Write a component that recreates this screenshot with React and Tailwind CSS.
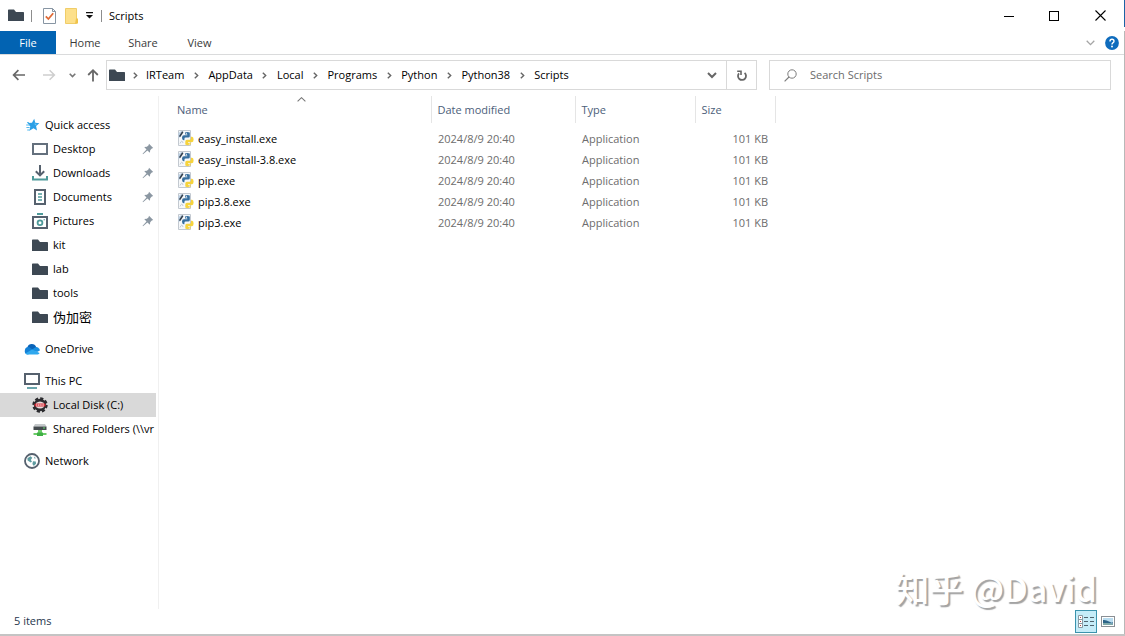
import React from "react";

const Folder = ({ className = "" }) => (
  <svg width="16" height="13" viewBox="0 0 16 13" className={"shrink-0 " + className} aria-hidden="true">
    <path d="M0 1.2Q0 .5.7.5H6L8 3H15.3Q16 3 16 3.7V12H0Z" fill="#3d4853" />
  </svg>
);

const Star = () => (
  <svg width="14" height="14" viewBox="0 0 14 14" className="ml-[2px] shrink-0" aria-hidden="true">
    <path d="M8.2.8 9.3 4.8 13.4 5.2 10.1 7.9 11 12.6 7.5 10.2 3.4 12.8 4.3 8.4 1.6 5 6 4.8Z" fill="#2b9fe6" />
    <path d="M.2 7H4M.4 9.5H3.6M1.2 12H3.8M1 4.6H3" stroke="#55b9ee" strokeWidth="1" />
    <path d="M8 3 8.8 5.6 11 6 9 7.6Z" fill="#6cc6f5" />
  </svg>
);

const Desktop = () => (
  <svg width="16" height="16" viewBox="0 0 16 16" aria-hidden="true">
    <rect x="1" y="3" width="14" height="10" fill="none" stroke="#64707d" strokeWidth="2" />
  </svg>
);

const Downloads = () => (
  <svg width="16" height="16" viewBox="0 0 16 16" fill="none" aria-hidden="true">
    <path d="M8 0V10M3.8 6.2 8 10.4 12.2 6.2" stroke="#56616e" strokeWidth="2" />
    <path d="M1 11V14.5H15V11" stroke="#4d9a9a" strokeWidth="2" />
  </svg>
);

const Documents = () => (
  <svg width="16" height="16" viewBox="0 0 16 16" fill="none" aria-hidden="true">
    <rect x="3" y="1" width="10" height="14" stroke="#56616e" strokeWidth="2" />
    <path d="M6 5H10M6 8H10M6 11H10" stroke="#4d9a9a" strokeWidth="1.4" />
  </svg>
);

const Pictures = () => (
  <svg width="16" height="16" viewBox="0 0 16 16" fill="none" aria-hidden="true">
    <path d="M5 1H11" stroke="#4d9a9a" strokeWidth="2" />
    <rect x="1" y="4" width="14" height="11" stroke="#56616e" strokeWidth="2" />
    <circle cx="8" cy="9.8" r="2.4" stroke="#4d9a9a" strokeWidth="1.8" />
    <path d="M11.5 6.8H13" stroke="#4d9a9a" />
  </svg>
);

const OneDrive = () => (
  <svg width="16" height="16" viewBox="0 0 16 16" aria-hidden="true">
    <path d="M3.4 6.3A4.7 4.7 0 0 1 12.2 6L13 9 6 10Z" fill="#0a63b8" />
    <path d="M3.6 13.4A3.6 3.6 0 1 1 5.4 6.2L12 11Z" fill="#1480d6" />
    <path d="M7.5 9 11 6.5A3.4 3.4 0 0 1 15.9 9.5L13 11Z" fill="#1a8fe0" />
    <path d="M1.3 12.4 8 8.5 15.6 12A2 2 0 0 1 13.5 13.4H3.6Q2 13.4 1.3 12.4Z" fill="#2fa8ee" />
  </svg>
);

const ThisPC = () => (
  <svg width="16" height="16" viewBox="0 0 16 16" fill="none" aria-hidden="true">
    <rect x="1" y="1" width="14" height="10" stroke="#56616e" strokeWidth="2" />
    <path d="M3 15H13" stroke="#6aa5ac" strokeWidth="2" />
  </svg>
);

const Disk = () => (
  <svg width="16" height="16" viewBox="0 0 16 16" aria-hidden="true">
    <circle cx="8" cy="8" r="6.6" fill="none" stroke="#2b2b2e" strokeWidth="2.2" strokeDasharray="3.2 1.98" />
    <circle cx="8" cy="8" r="6.2" fill="#2b2b2e" />
    <path d="M4 6Q8 3 12 6V10Q8 13 4 10Z" fill="#eadfdf" />
    <rect x="2.5" y="6.4" width="11" height="3.2" rx="1" fill="#d5303a" />
    <path d="M4 8H5.2M6.3 7.3V8.8M7.4 8H9M10 7.3V8.8M11 8H12" stroke="#fff" strokeWidth=".9" />
  </svg>
);

const Shared = () => (
  <svg width="16" height="16" viewBox="0 0 16 16" aria-hidden="true">
    <path d="M3 3H13L14.5 5.5H1.5Z" fill="#c4c8ca" />
    <rect x="1.5" y="5.5" width="13" height="3.5" fill="#454b4f" />
    <rect x="11" y="6.5" width="2" height="1" fill="#64df6c" />
    <path d="M6 9H10V12H14.5V14H1.5V12H6Z" fill="#6ccb68" />
    <path d="M5 11.5H11V15H5Z" fill="#3fb044" />
  </svg>
);

const Network = () => (
  <svg width="16" height="16" viewBox="0 0 16 16" aria-hidden="true">
    <circle cx="8" cy="8" r="7" fill="#fff" stroke="#56616e" strokeWidth="1.8" />
    <path d="M3.4 5.2 6.5 3.3 8.3 4.8 6.8 7 8 8.6 6.7 9.4 3.6 7.6Z" fill="#5d9ba0" />
    <path d="M9 8.2 11.8 8.6 12 10.8 9.8 13 8.4 11Z" fill="#5d9ba0" />
    <path d="M10 3.4 12 5.2 10.4 5.5Z" fill="#5d9ba0" />
  </svg>
);

const Pin = () => (
  <svg width="12" height="12" viewBox="0 0 12 12" className="shrink-0" aria-hidden="true">
    <path d="M7 .8 11.2 5 9.8 5.4 8.2 7.2 7.9 9.8 5.4 7.4 1 11.2.6 10.8 4.5 6.5 2.2 4.1 4.9 3.8 6.6 2.2Z" fill="#8b97a2" />
  </svg>
);

const PyFile = () => (
  <svg width="17" height="17" viewBox="0 0 17 17" className="shrink-0" aria-hidden="true">
    <path d="M1.5.5H13.5V15.5H1.5Z" fill="#f6f8fa" stroke="#c3c9d0" />
    <path d="M1.5 3 4 1.2H6.5L3 7.2 1.5 8Z" fill="#bcd0e3" />
    <path d="M2.6 6.6 5.8 1.8" stroke="#333f4c" strokeWidth="1.6" />
    <path d="M3 13.5Q5 9 6 13" stroke="#c3ccd5" fill="none" />
    <path d="M8 2.6Q10.5 1.6 12.8 2.6V6.2Q12.8 7.6 11.2 7.6H8.8Q7.4 7.6 7.4 9V10.3H6.6Q5 10 5 7.6 5 5.2 7 5.2H10.3V4.6H8Z" fill="#376f9f" />
    <path d="M14 6.8H15Q16.6 7 16.6 9.6 16.6 12.2 15 12.2H11V12.9H13.6V14.6Q11 16 8.3 14.6V11.4Q8.3 9.8 9.9 9.8H12.4Q14 9.8 14 8.2Z" fill="#f6d33c" />
    <circle cx="9.3" cy="3.7" r=".6" fill="#fff" />
    <circle cx="12.3" cy="14" r=".6" fill="#fff" />
  </svg>
);

const Chevron = ({ d, w, h, stroke = "#5f5f5f", sw = 1.6 }) => (
  <svg width={w} height={h} viewBox={`0 0 ${w} ${h}`} fill="none" aria-hidden="true">
    <path d={d} stroke={stroke} strokeWidth={sw} />
  </svg>
);

const groups = [
  [
    { label: "Quick access", icon: Star },
    { label: "Desktop", icon: Desktop, child: true, pin: true },
    { label: "Downloads", icon: Downloads, child: true, pin: true },
    { label: "Documents", icon: Documents, child: true, pin: true },
    { label: "Pictures", icon: Pictures, child: true, pin: true },
    { label: "kit", icon: Folder, child: true },
    { label: "lab", icon: Folder, child: true },
    { label: "tools", icon: Folder, child: true },
    { label: "伪加密", icon: Folder, child: true, cjk: true },
  ],
  [{ label: "OneDrive", icon: OneDrive }],
  [
    { label: "This PC", icon: ThisPC },
    { label: "Local Disk (C:)", icon: Disk, child: true, active: true },
    { label: "Shared Folders (\\\\vr", icon: Shared, child: true },
  ],
  [{ label: "Network", icon: Network }],
];

const files = ["easy_install.exe", "easy_install-3.8.exe", "pip.exe", "pip3.8.exe", "pip3.exe"];
const crumbs = ["IRTeam", "AppData", "Local", "Programs", "Python", "Python38", "Scripts"];

function TitleBar() {
  return (
    <header className="flex h-[31px] shrink-0 items-center pl-2">
      <Folder />
      <span className="ml-[7px] h-3 w-px bg-[#8d8d8d]" />
      <button aria-label="Properties" className="ml-[11px]">
        <svg width="13" height="16" viewBox="0 0 13 16" fill="none">
          <path d="M.5.5H9.5L12.5 3.5V15.5H.5Z" fill="#fff" stroke="#8795a3" />
          <path d="M9.5.5V3.5H12.5" stroke="#8795a3" />
          <path d="M2.8 8.3 5.4 11 10.2 5.2" stroke="#df6a36" strokeWidth="1.8" />
        </svg>
      </button>
      <button aria-label="New folder" className="ml-[9px]">
        <svg width="14" height="16" viewBox="0 0 14 16">
          <path d="M.5.5H11.5V15.5H.5Z" fill="#fde08b" stroke="#f0cd68" />
          <path d="M11 10.5H13V15.5H10Z" fill="#f0c34a" />
        </svg>
      </button>
      <button aria-label="Customize Quick Access Toolbar" className="ml-[7px]">
        <svg width="7" height="7" viewBox="0 0 7 7"><path d="M0 0H7V1.2H0ZM0 3H7L3.5 6.5Z" fill="#111" /></svg>
      </button>
      <span className="ml-2 h-3 w-px bg-[#8d8d8d]" />
      <h1 className="ml-[7px] flex-1 text-black">Scripts</h1>
      <button aria-label="Minimize" className="flex h-full w-[46px] items-center justify-center">
        <svg width="10" height="10" viewBox="0 0 10 10"><path d="M0 5.5H10" stroke="#000" /></svg>
      </button>
      <button aria-label="Maximize" className="flex h-full w-[44px] items-center justify-center">
        <svg width="10" height="10" viewBox="0 0 10 10"><rect x=".5" y=".5" width="9" height="9" fill="none" stroke="#000" /></svg>
      </button>
      <button aria-label="Close" className="flex h-full w-[48px] items-center justify-center">
        <svg width="11" height="11" viewBox="0 0 11 11"><path d="M.5.5 10.5 10.5M10.5.5.5 10.5" stroke="#000" strokeWidth="1.1" /></svg>
      </button>
      <span className="h-[27px] w-px self-start bg-[#1b63a5]" />
    </header>
  );
}

function Ribbon() {
  return (
    <div className="flex h-6 shrink-0 items-stretch border-b border-[#dadbdc] pr-[5px] text-[#3a3a3a]">
      <button className="w-14 bg-[#0263b2] text-white">File</button>
      <button className="w-[58px]">Home</button>
      <button className="w-[58px]">Share</button>
      <button className="w-[55px]">View</button>
      <span className="flex-1" />
      <button aria-label="Expand the Ribbon" className="mr-[10px]">
        <Chevron w={9} h={6} d="M.7.7 4.5 4.6 8.3.7" stroke="#a5a5a5" sw={1.3} />
      </button>
      <button aria-label="Help">
        <svg width="14" height="14" viewBox="0 0 14 14" fill="none">
          <circle cx="7" cy="7" r="6.9" fill="#0f6cbd" />
          <path d="M5 5.4Q5 3.3 7 3.3T9 5.2Q9 6.3 7.8 6.9 7 7.4 7 8.5" stroke="#fff" strokeWidth="1.4" />
          <circle cx="7" cy="10.5" r=".95" fill="#fff" />
        </svg>
      </button>
    </div>
  );
}

function AddressRow() {
  return (
    <div className="flex shrink-0 items-center pt-[5px] pr-[13px] pl-3">
      <div className="flex w-[94px] shrink-0 items-center">
        <button aria-label="Back">
          <svg width="14" height="12" viewBox="0 0 14 12" fill="none"><path d="M13 6H2M6.4 1.2 1.6 6 6.4 10.8" stroke="#676767" strokeWidth="1.7" /></svg>
        </button>
        <button aria-label="Forward" className="ml-4">
          <svg width="14" height="12" viewBox="0 0 14 12" fill="none"><path d="M1 6H12M7.6 1.2 12.4 6 7.6 10.8" stroke="#cecece" strokeWidth="1.5" /></svg>
        </button>
        <button aria-label="Recent locations" className="ml-[13px]">
          <Chevron w={7} h={5} d="M.7.7 3.5 3.5 6.3.7" stroke="#777" />
        </button>
        <button aria-label="Up" className="ml-[11px]">
          <svg width="12" height="14" viewBox="0 0 12 14" fill="none"><path d="M6 13.5V2M1.2 7 6 2.2 10.8 7" stroke="#676767" strokeWidth="1.8" /></svg>
        </button>
      </div>
      <div className="flex h-[30px] min-w-0 flex-1 border border-[#d9d9d9]">
        <nav aria-label="Address" className="flex min-w-0 flex-1 items-center pl-[2px]">
          <Folder />
          {crumbs.map((c, i) => (
            <React.Fragment key={c}>
              <span className={i === 0 ? "flex w-[21px] justify-center" : "flex w-6 justify-center"}>
                <Chevron w={5} h={7} d="M.8.7 3.7 3.5.8 6.3" stroke="#666" sw={1.4} />
              </span>
              <a href="#" className="whitespace-nowrap text-black">{c}</a>
            </React.Fragment>
          ))}
        </nav>
        <button aria-label="Previous locations" className="flex w-7 items-center justify-center">
          <Chevron w={10} h={7} d="M1 1 5 5 9 1" stroke="#666" sw={2} />
        </button>
        <button aria-label="Refresh" className="flex w-[30px] items-center justify-center border-l border-[#d9d9d9]">
          <svg width="12" height="13" viewBox="0 0 12 13" fill="none">
            <path d="M8.6 3.9A4 4 0 1 1 3 4.3" stroke="#666" strokeWidth="1.8" />
            <path d="M1.2 2.2H5V6" stroke="#666" strokeWidth="1.6" />
          </svg>
        </button>
      </div>
      <label className="ml-3 flex h-[30px] w-[342px] items-center border border-[#d9d9d9] pl-[14px]">
        <svg width="13" height="13" viewBox="0 0 13 13" fill="none" aria-hidden="true">
          <circle cx="8" cy="5" r="4.2" stroke="#7d7d7d" />
          <path d="M5 8 .6 12.4" stroke="#7d7d7d" strokeWidth="1.2" />
        </svg>
        <input type="text" aria-label="Search Scripts" placeholder="Search Scripts" className="ml-[13px] min-w-0 flex-1 bg-transparent outline-none placeholder:text-[#6b6b6b]" />
      </label>
    </div>
  );
}

function Sidebar() {
  return (
    <nav aria-label="Folders" className="flex w-[159px] shrink-0 flex-col gap-2 border-r border-[#f0f0f0] pt-[17px] pr-[2px]">
      {groups.map((g, i) => (
        <ul key={i}>
          {g.map(({ label, icon: Icon, child, pin, active, cjk }) => (
            <li key={label}>
              <a
                href="#"
                className={
                  "flex h-6 items-center text-black " +
                  (child ? "pl-8 " : "pl-6 ") +
                  (active ? "bg-[#d9d9d9]" : "")
                }
              >
                <span className="flex w-4 shrink-0 justify-center"><Icon /></span>
                <span className={"ml-[5px] flex-1 whitespace-nowrap " + (cjk ? "text-[13px]" : "")}>{label}</span>
                {pin && <span className="mr-[2px]"><Pin /></span>}
              </a>
            </li>
          ))}
        </ul>
      ))}
    </nav>
  );
}

function FileTable() {
  return (
    <main className="min-w-0 flex-1 pl-[6px]">
      <table className="w-[610px] table-fixed border-collapse text-left text-[#6d6d6d]">
        <colgroup>
          <col className="w-[266px]" />
          <col className="w-[144px]" />
          <col className="w-[120px]" />
          <col className="w-[80px]" />
        </colgroup>
        <thead className="text-[#4c607a]">
          <tr className="h-[27px]">
            <th className="relative border-r border-[#e5e5e5] pl-3 font-normal">
              Name
              <span className="absolute top-px left-[132px]">
                <Chevron w={9} h={5} d="M.6 4.4 4.5.7 8.4 4.4" stroke="#777" sw={1.1} />
              </span>
            </th>
            <th className="border-r border-[#e5e5e5] pl-[6px] font-normal">Date modified</th>
            <th className="border-r border-[#e5e5e5] pl-[6px] font-normal">Type</th>
            <th className="border-r border-[#e5e5e5] pl-[6px] font-normal">Size</th>
          </tr>
        </thead>
        <tbody className="before:block before:h-[5px] before:content-['']">
          {files.map((f) => (
            <tr key={f} className="h-[21px]">
              <td className="pl-3">
                <span className="flex items-center gap-1 text-black"><PyFile />{f}</span>
              </td>
              <td className="pl-[7px]">2024/8/9 20:40</td>
              <td className="pl-[7px]">Application</td>
              <td className="pr-[7px] text-right">101 KB</td>
            </tr>
          ))}
        </tbody>
      </table>
    </main>
  );
}

function StatusBar() {
  return (
    <footer className="flex h-[25px] shrink-0 items-center pr-[9px] pb-px pl-[14px] text-[#26364d]">
      <span className="flex-1">5 items</span>
      <button aria-label="Details view" className="flex h-[23px] w-[22px] items-center justify-center border border-[#3b93ad] bg-[#c5ecf8]">
        <svg width="16" height="13" viewBox="0 0 16 13" fill="none">
          <path d="M.5.5H4.5V12.5H.5ZM.5 4.5H4.5M.5 8.5H4.5" fill="#fff" stroke="#8a9aa3" />
          <path d="M2 2.5H3M2 6.5H3M2 10.5H3" stroke="#b04a4a" />
          <path d="M6 2.5H10M12 2.5H16M6 6.5H10M12 6.5H16M6 10.5H10M12 10.5H16" stroke="#50646e" />
        </svg>
      </button>
      <button aria-label="Large icons view" className="ml-1">
        <svg width="14" height="11" viewBox="0 0 14 11">
          <rect x=".5" y=".5" width="13" height="10" fill="#fff" stroke="#8a8f94" />
          <path d="M2 2H12V9H2Z" fill="#b9dcef" />
          <path d="M2 4Q5 3.5 8 5.5T12 6V7.5H2Z" fill="#2c6488" />
          <path d="M2 7Q6 6.5 12 8V9H2Z" fill="#7fa9a8" />
        </svg>
      </button>
    </footer>
  );
}

export default function App() {
  return (
    <div className="relative flex h-screen flex-col overflow-hidden bg-white font-['Open_Sans','Noto_Sans_CJK_SC',sans-serif] text-[11px] leading-4">
      <TitleBar />
      <div className="flex min-h-0 flex-1 flex-col border-r border-[#b8b8b8]">
        <Ribbon />
        <AddressRow />
        <div className="flex min-h-0 flex-1 pt-[6px]">
          <Sidebar />
          <FileTable />
        </div>
        <StatusBar />
      </div>
      <div className="h-[2px] shrink-0 bg-[#c4c4c4]" />
      <div className="pointer-events-none absolute right-[28px] bottom-[28px] font-['Noto_Sans_CJK_SC',sans-serif] text-[34px] leading-10 font-medium text-white [text-shadow:2px_2px_1px_#a3a3a3]">
        知乎 @David
      </div>
    </div>
  );
}
